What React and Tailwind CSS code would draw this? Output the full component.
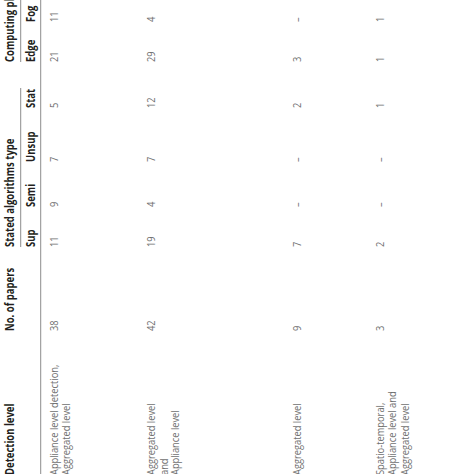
import React from 'react'

const cols = "grid grid-cols-[144px_84px_40px_45px_54px_46px_40px_40px_40px]"

const rows = [
  { h: "h-[77.6px]", level: ["Appliance level detection,", "Aggregated level"], vals: ["38", "11", "9", "7", "5", "21", "11", "6"] },
  { h: "h-[116.8px]", level: ["Aggregated level", "and", "Appliance level"], vals: ["42", "19", "4", "7", "12", "29", "4", "9"] },
  { h: "h-[66.4px]", level: ["Aggregated level"], vals: ["9", "7", "–", "–", "2", "3", "–", "4"] },
  { h: "h-[100px]", level: ["Spatio-temporal,", "Appliance level and", "Aggregated level"], vals: ["3", "2", "–", "–", "1", "1", "1", "1"] },
]

function App() {
  return (
    <div className="w-[474px] h-[474px] overflow-hidden bg-white">
      <div className="w-[540px] origin-top-left translate-y-[475px] -rotate-90 scale-y-[1.25] font-['Open_Sans',sans-serif]">
        {/* header */}
        <div className={`${cols} grid-rows-[17px_15px] border-b border-[#a3a3a3] text-[9.5px] leading-[12px] font-bold text-[#231f20]`}>
          <div className="row-span-2 pt-[2px] whitespace-nowrap">Detection level</div>
          <div className="row-span-2 pt-[2px] whitespace-nowrap">No. of papers</div>
          <div className="col-span-4 mr-[26px] border-b border-[#a3a3a3] pt-[2px] whitespace-nowrap">Stated algorithms type</div>
          <div className="col-span-3 border-b border-[#a3a3a3] pt-[2px] whitespace-nowrap">Computing platform</div>
          <div className="flex items-center">Sup</div>
          <div className="flex items-center">Semi</div>
          <div className="flex items-center">Unsup</div>
          <div className="flex items-center">Stat</div>
          <div className="flex items-center">Edge</div>
          <div className="flex items-center">Fog</div>
          <div className="flex items-center">Cloud</div>
        </div>

        {rows.map((r, i) => (
          <div key={i} className={`${cols} ${r.h} pt-[5.3px] text-[9.3px] leading-[9.8px] text-[#707070]`}>
            <div className="whitespace-nowrap">
              {r.level.map((l, j) => (
                <span key={j} className="block">{l}</span>
              ))}
            </div>
            {r.vals.map((v, j) => (
              <div key={j}>{v}</div>
            ))}
          </div>
        ))}
      </div>
    </div>
  )
}

export default App
